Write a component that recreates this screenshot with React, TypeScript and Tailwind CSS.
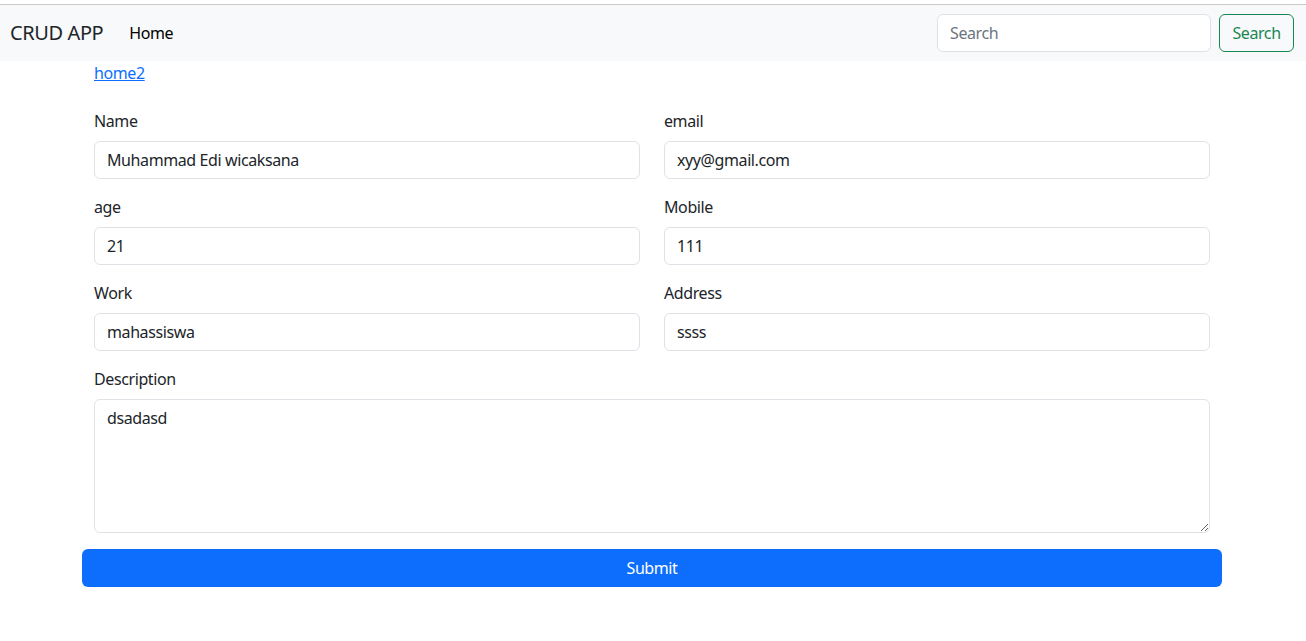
import React from 'react'

const font = { fontFamily: '"Noto Sans", "Open Sans", sans-serif' }

function Field({ label, value }: { label: string; value: string }) {
  return (
    <div className="mb-4">
      <label className="block mb-2 text-base leading-6 text-[#212529]">{label}</label>
      <input
        readOnly
        value={value}
        className="block w-full h-[38px] px-3 py-1.5 text-base leading-6 tracking-[-0.4px] text-[#212529] bg-white border border-[#dee2e6] rounded-md outline-none"
      />
    </div>
  )
}

export default function App() {
  return (
    <div className="min-h-screen bg-white pt-[4px] text-[#212529] tracking-[-0.4px]" style={font}>
      {/* Navbar */}
      <nav className="border-t border-[#c9c9c9] bg-[#f8f9fa] h-[57px] flex items-center justify-between pl-[10px] pr-[12px]">
        <div className="flex items-center">
          <span className="text-xl leading-[30px] text-[#212529] mr-[18px]">CRUD APP</span>
          <a className="px-2 text-base text-black">Home</a>
        </div>
        <div className="flex items-center gap-2">
          <input
            placeholder="Search"
            className="w-[274px] h-[38px] px-3 text-base tracking-[-0.4px] bg-white border border-[#dee2e6] rounded-md outline-none placeholder:text-[#6c757d]"
          />
          <button className="w-[75px] h-[38px] text-base tracking-[-0.4px] text-[#198754] border border-[#198754] rounded-md">Search</button>
        </div>
      </nav>

      {/* Form */}
      <div className="w-[1140px] ml-[82px]">
        <div className="px-3 pb-6 leading-6">
          <a href="#" className="text-[#0d6efd] underline">home2</a>
        </div>
        <div className="grid grid-cols-2 gap-x-6 px-3">
          <Field label="Name" value="Muhammad Edi wicaksana" />
          <Field label="email" value="xyy@gmail.com" />
          <Field label="age" value="21" />
          <Field label="Mobile" value="111" />
          <Field label="Work" value="mahassiswa" />
          <Field label="Address" value="ssss" />
        </div>
        <div className="px-3 mb-4">
          <label className="block mb-2 text-base leading-6">Description</label>
          <textarea
            readOnly
            rows={5}
            value="dsadasd"
            className="block w-full h-[134px] px-3 py-1.5 text-base leading-6 tracking-[-0.4px] text-[#212529] bg-white border border-[#dee2e6] rounded-md outline-none"
          />
        </div>
        <button className="w-full h-[38px] bg-[#0d6efd] text-white text-base tracking-[-0.4px] rounded-md">Submit</button>
      </div>
    </div>
  )
}
